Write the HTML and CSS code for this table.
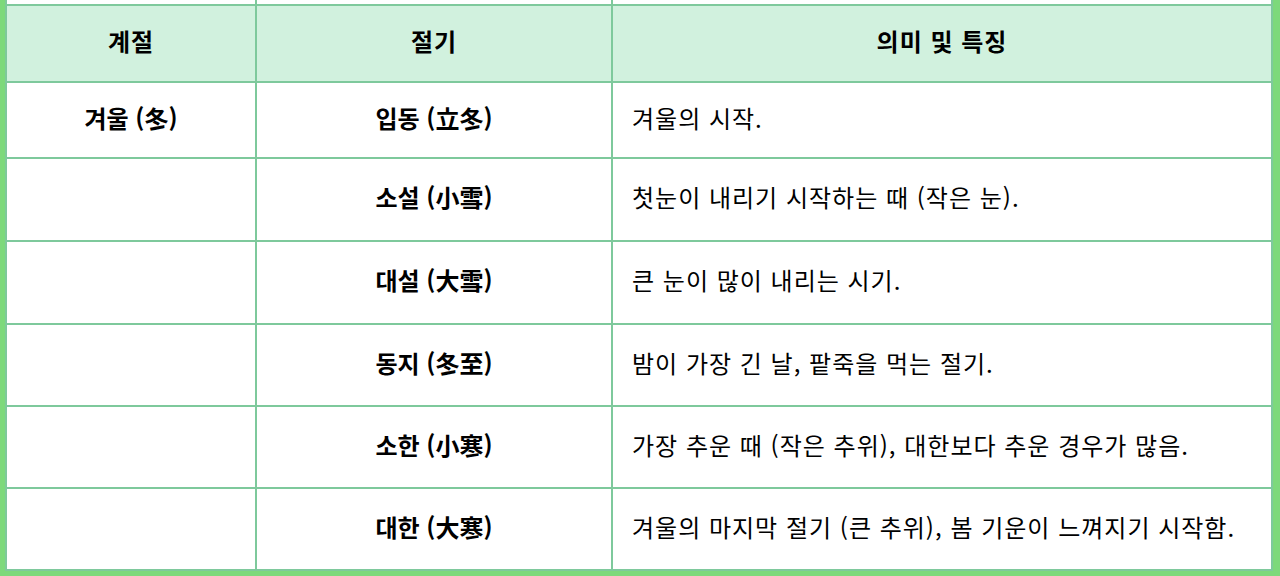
FILE: index.html
```html
<!DOCTYPE html>
<html lang="ko">
<head>
<meta charset="utf-8">
<title>겨울 절기</title>
<link rel="stylesheet" href="styles.css">
</head>
<body>
<div class="frame">
  <table class="terms">
    <colgroup>
      <col class="c-season">
      <col class="c-term">
      <col class="c-desc">
    </colgroup>
    <tbody>
      <tr class="cut"><td></td><td></td><td></td></tr>
      <tr class="head">
        <th>계절</th>
        <th>절기</th>
        <th>의미 및 특징</th>
      </tr>
      <tr class="r-first">
        <td class="season">겨울 (冬)</td>
        <td class="term">입동 (立冬)</td>
        <td class="desc">겨울의 시작.</td>
      </tr>
      <tr class="r-tall">
        <td class="season"></td>
        <td class="term">소설 (小雪)</td>
        <td class="desc">첫눈이 내리기 시작하는 때 (작은 눈).</td>
      </tr>
      <tr class="r-tall">
        <td class="season"></td>
        <td class="term">대설 (大雪)</td>
        <td class="desc">큰 눈이 많이 내리는 시기.</td>
      </tr>
      <tr>
        <td class="season"></td>
        <td class="term">동지 (冬至)</td>
        <td class="desc">밤이 가장 긴 날, 팥죽을 먹는 절기.</td>
      </tr>
      <tr>
        <td class="season"></td>
        <td class="term">소한 (小寒)</td>
        <td class="desc">가장 추운 때 (작은 추위), 대한보다 추운 경우가 많음.</td>
      </tr>
      <tr>
        <td class="season"></td>
        <td class="term">대한 (大寒)</td>
        <td class="desc">겨울의 마지막 절기 (큰 추위), 봄 기운이 느껴지기 시작함.</td>
      </tr>
    </tbody>
  </table>
</div>
</body>
</html>
```

FILE: styles.css
```css
html, body {
  margin: 0;
  padding: 0;
  background: #7dd97b;
}

.frame {
  width: 1280px;
  height: 576px;
  box-sizing: border-box;
  padding: 0 7px 6px 5px;
  background: #7dd97b;
  overflow: hidden;
}

.terms {
  width: 100%;
  border-collapse: collapse;
  table-layout: fixed;
  background: #ffffff;
  font-family: "Noto Sans CJK KR", "Noto Sans", sans-serif;
  font-size: 24px;
  color: #000000;
}

.c-season { width: 250px; }
.c-term { width: 356px; }

.terms th,
.terms td {
  border: 2px solid #7ec99c;
  padding: 0 0 6px 0;
  vertical-align: middle;
}

.terms .cut td {
  border-top: none;
  height: 4px;
  padding: 0;
}

.terms .head th {
  background: #d1f1de;
  height: 69px;
  font-weight: 700;
  text-align: center;
  letter-spacing: 1px;
}

.terms td {
  height: 74px;
}

.terms .r-first td {
  height: 68px;
}

.terms .r-tall td {
  height: 75px;
}

.season,
.term {
  text-align: center;
  font-weight: 700;
}

.terms .desc {
  text-align: left;
  padding-left: 19px;
  font-weight: 400;
  letter-spacing: 1px;
}
```
